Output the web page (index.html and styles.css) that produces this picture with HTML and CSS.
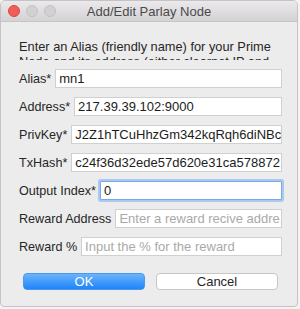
FILE: index.html
```html
<!DOCTYPE html>
<html lang="en">
<head>
    <meta charset="UTF-8">
    <title>Add/Edit Parlay Node</title>
    <link rel="stylesheet" href="styles.css">
</head>
<body>
    <div class="window">
        <div class="titlebar">
            <div class="lights">
                <span class="light close"></span>
                <span class="light"></span>
                <span class="light"></span>
            </div>
            <div class="title">Add/Edit Parlay Node</div>
        </div>

        <div class="content">
            <div class="intro">
                Enter an Alias (friendly name) for your Prime Node and its address (either clearnet IP and port or onion address).
            </div>

            <div class="form">
                <div class="row">
                    <label>Alias*</label>
                    <div class="field">mn1</div>
                </div>
                <div class="row">
                    <label>Address*</label>
                    <div class="field">217.39.39.102:9000</div>
                </div>
                <div class="row">
                    <label>PrivKey*</label>
                    <div class="field clip">J2Z1hTCuHhzGm342kqRqh6diNBcQ</div>
                </div>
                <div class="row">
                    <label>TxHash*</label>
                    <div class="field clip">c24f36d32ede57d620e31ca57887210</div>
                </div>
                <div class="row">
                    <label>Output Index*</label>
                    <div class="field focus">0</div>
                </div>
                <div class="row">
                    <label>Reward Address</label>
                    <div class="field placeholder">Enter a reward recive addre...</div>
                </div>
                <div class="row">
                    <label>Reward %</label>
                    <div class="field placeholder">Input the % for the reward</div>
                </div>
            </div>

            <div class="buttons">
                <button class="btn primary">OK</button>
                <button class="btn">Cancel</button>
            </div>
        </div>
    </div>
</body>
</html>
```

FILE: styles.css
```css
* {
    margin: 0;
    padding: 0;
    box-sizing: border-box;
}

body {
    background: #f3f3f3;
    font-family: 'Liberation Sans', Arial, sans-serif;
    color: #262626;
}

.window {
    width: 298px;
    height: 307px;
    background: #ececec;
    border: 1px solid #c4c4c4;
    border-radius: 5px 5px 4px 4px;
    overflow: hidden;
    display: flex;
    flex-direction: column;
}

.titlebar {
    height: 21px;
    background: linear-gradient(#ebe9eb, #d4d2d4);
    border-bottom: 1px solid #c6c6c6;
    display: flex;
    align-items: center;
    position: relative;
}

.lights {
    display: flex;
    gap: 6px;
    padding-left: 7px;
}

.light {
    width: 12px;
    height: 12px;
    border-radius: 50%;
    background: #d2d1d2;
    border: 1px solid #c2c1c2;
}

.light.close {
    background: #ee5f58;
    border-color: #d9483f;
}

.title {
    position: absolute;
    left: 0;
    right: 0;
    text-align: center;
    font-size: 13px;
    color: #4a4a4a;
}

.content {
    padding: 17px 15px 0 18px;
    flex: 1;
    display: flex;
    flex-direction: column;
}

.intro {
    font-size: 12.8px;
    line-height: 15px;
    height: 21px;
    overflow: hidden;
    margin-bottom: 9px;
}

.form {
    display: flex;
    flex-direction: column;
    gap: 9px;
}

.row {
    display: flex;
    align-items: center;
    gap: 4px;
    height: 19px;
}

.row label {
    font-size: 12.6px;
    white-space: nowrap;
}

.field {
    flex: 1;
    height: 19px;
    background: #fff;
    border: 1px solid #d0d0d0;
    font-size: 13px;
    line-height: 17px;
    padding: 0 3px;
    white-space: nowrap;
    overflow: hidden;
    color: #1c1c1c;
}

.field.placeholder {
    color: #a9a9a9;
}

.field.focus {
    border-color: #7fa7e4;
    box-shadow: 0 0 0 2px #a9c8f2;
    border-radius: 1px;
}

.buttons {
    display: flex;
    gap: 11px;
    margin-top: 17px;
    padding: 0 4px 0 4px;
}

.btn {
    flex: 1;
    height: 17px;
    font-family: 'Liberation Sans', Arial, sans-serif;
    font-size: 13px;
    border-radius: 4px;
    background: #fff;
    border: 1px solid #c6c6c6;
    color: #262626;
}

.btn.primary {
    background: linear-gradient(#6db3fb, #1d84fb);
    border-color: #4a97f0;
    color: #fff;
}
```
